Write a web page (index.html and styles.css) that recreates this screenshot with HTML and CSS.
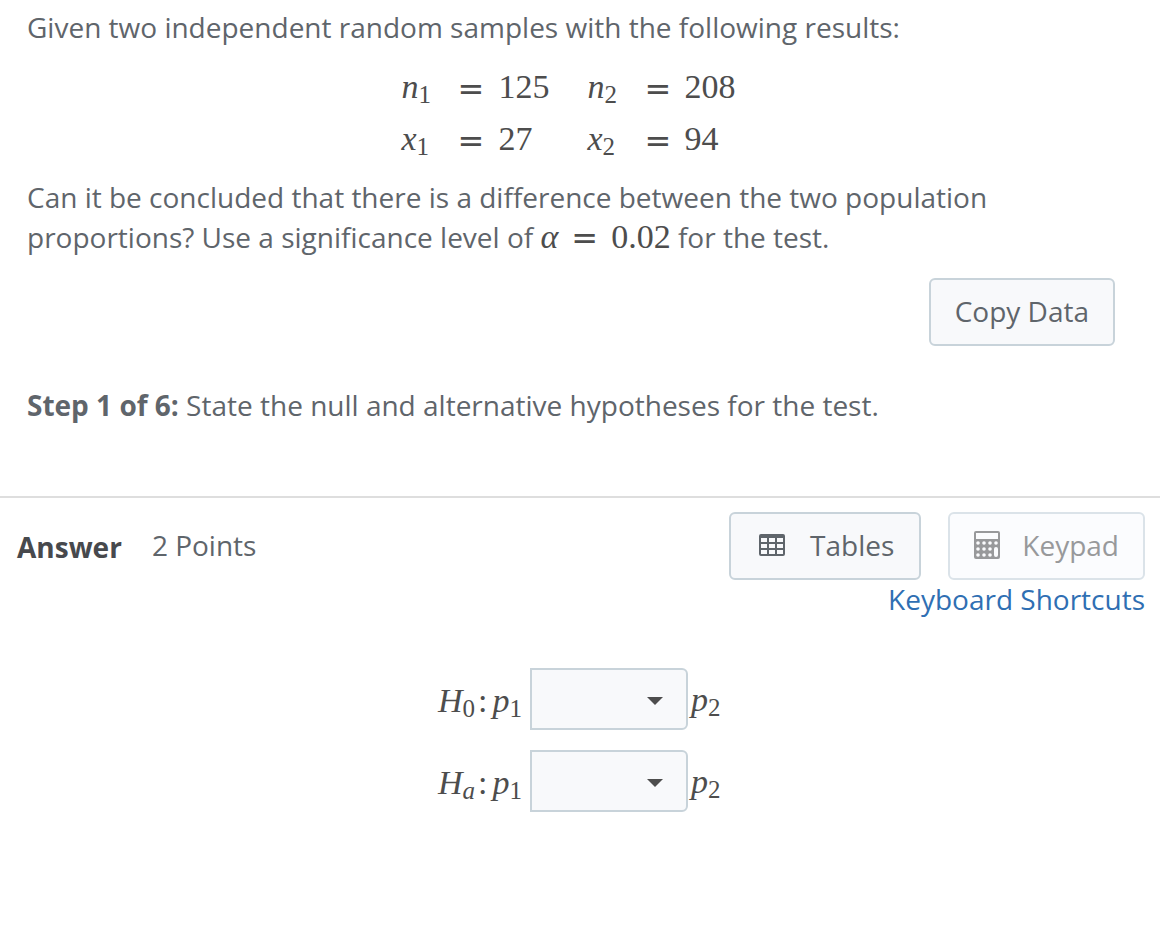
FILE: index.html
```html
<!DOCTYPE html>
<html lang="en">
<head>
<meta charset="utf-8">
<meta name="viewport" content="width=device-width, initial-scale=1">
<title>Two population proportions</title>
<link rel="stylesheet" href="styles.css">
</head>
<body>
<main>
  <section class="question">
    <p>Given two independent random samples with the following results:</p>
    <div class="data math">
      <span><i>n</i><sub>1</sub></span><span class="eq">=</span><span>125</span>
      <span><i>n</i><sub>2</sub></span><span class="eq">=</span><span>208</span>
      <span><i>x</i><sub>1</sub></span><span class="eq">=</span><span>27</span>
      <span><i>x</i><sub>2</sub></span><span class="eq">=</span><span>94</span>
    </div>
    <p>Can it be concluded that there is a difference between the two population proportions? Use a significance level of <span class="math"><i>α</i><span class="eq inline-eq">=</span>0.02</span> for the test.</p>
    <div class="copy-row"><button class="btn copy" type="button">Copy Data</button></div>
    <p class="step"><strong>Step 1 of 6:</strong> State the null and alternative hypotheses for the test.</p>
  </section>
  <section class="answer">
    <header class="answer-bar">
      <div class="heading"><h2>Answer</h2><span>2 Points</span></div>
      <div class="tools">
        <div class="buttons">
          <button class="btn tables" type="button">
            <svg width="28" height="24" viewBox="0 0 28 24" aria-hidden="true"><path fill="currentColor" fill-rule="evenodd" d="M3 1h22a2 2 0 0 1 2 2v18a2 2 0 0 1-2 2H3a2 2 0 0 1-2-2V3a2 2 0 0 1 2-2zM3 5v4h6V5zM11 5v4h6V5zM19 5v4h6V5zM3 11v4h6v-4zM11 11v4h6v-4zM19 11v4h6v-4zM3 17v4h6v-4zM11 17v4h6v-4zM19 17v4h6v-4z"/></svg>
            Tables
          </button>
          <button class="btn keypad" type="button" disabled>
            <svg width="26" height="28" viewBox="0 0 26 28" aria-hidden="true">
              <rect width="26" height="28" rx="2" fill="currentColor"/>
              <g fill="#fbfcfe"><rect x="2" y="2" width="22" height="6"/>
              <circle cx="4" cy="12" r="1.8"/><circle cx="10" cy="12" r="1.8"/><circle cx="16" cy="12" r="1.8"/><circle cx="22" cy="12" r="1.8"/>
              <circle cx="4" cy="18" r="1.8"/><circle cx="10" cy="18" r="1.8"/><circle cx="16" cy="18" r="1.8"/>
              <circle cx="4" cy="24" r="1.8"/><circle cx="10" cy="24" r="1.8"/><circle cx="16" cy="24" r="1.8"/>
              <rect x="20" y="16" width="4" height="10" rx="2"/></g>
            </svg>
            Keypad
          </button>
        </div>
        <a href="#shortcuts">Keyboard Shortcuts</a>
      </div>
    </header>
    <div class="hypotheses math">
      <div class="hyp">
        <label for="null"><i>H</i><sub>0</sub><span class="colon">:</span><i>p</i><sub>1</sub></label>
        <span class="picker"><select id="null"><option></option><option>=</option><option>≠</option><option>&lt;</option><option>&gt;</option></select><svg width="16" height="8" viewBox="0 0 16 8" aria-hidden="true"><path d="M0 0h16L8 8z" fill="#4d4d4d"/></svg></span>
        <span class="rhs"><i>p</i><sub>2</sub></span>
      </div>
      <div class="hyp">
        <label for="alt"><i>H</i><sub><i>a</i></sub><span class="colon">:</span><i>p</i><sub>1</sub></label>
        <span class="picker"><select id="alt"><option></option><option>=</option><option>≠</option><option>&lt;</option><option>&gt;</option></select><svg width="16" height="8" viewBox="0 0 16 8" aria-hidden="true"><path d="M0 0h16L8 8z" fill="#4d4d4d"/></svg></span>
        <span class="rhs"><i>p</i><sub>2</sub></span>
      </div>
    </div>
  </section>
</main>
</body>
</html>
```
FILE: styles.css
```css
* { box-sizing: border-box; }
body { margin: 0; background: #fff; color: #5f656b; font: 28px/40px "Open Sans", "Noto Sans", sans-serif; }
p, h2 { margin: 0; }
.question { padding: 7px 44px 71px 27px; }
.math { color: #4d4d4d; font-family: "Liberation Serif", serif; font-size: 34px; }
.math sub { font-size: 25px; line-height: 1; vertical-align: -5px; }
.eq { font-family: "DejaVu Sans", sans-serif; font-size: 32px; }
p .math { line-height: 1; }
.inline-eq { margin: 0 13px; line-height: 1; vertical-align: -1px; }
.data { display: grid; grid-template-columns: 56px 41px 89px 57px 40px 50px; grid-auto-rows: 52px; justify-content: center; padding-right: 7px; margin: 14px 0 12px; line-height: 52px; }
.data .eq { line-height: 56px; }
.copy-row { display: flex; justify-content: flex-end; margin: 21px 1px 39px; }
.btn { height: 68px; border: 2px solid #c8d3da; border-radius: 6px; background: #f8f9fb; color: #5f656b; font: inherit; display: flex; align-items: center; justify-content: center; padding: 0 24px 2px; }
.btn:disabled { border-color: #dbe3e9; background: #fbfcfe; color: #98999b; }
.answer { border-top: 2px solid #dedede; padding: 14px 15px 126px 17px; }
.answer-bar { display: flex; justify-content: space-between; }
.heading { display: flex; align-items: flex-start; gap: 30px; padding-top: 13px; }
.heading h2 { padding-top: 2px; color: #47494d; font-size: 28px; line-height: 40px; }
.tools { display: flex; flex-direction: column; align-items: flex-end; }
.buttons { display: flex; gap: 27px; }
.tables { gap: 24px; padding: 0 25px 2px 27px; }
.keypad { gap: 22px; }
a { color: #2f6fb3; text-decoration: none; margin-top: -1px; }
.hypotheses { display: flex; flex-direction: column; align-items: center; gap: 20px; margin-top: 49px; }
.hyp { display: grid; grid-template-columns: 104px 158px 48px; align-items: center; line-height: 40px; }
.hyp label { text-align: right; padding: 4px 8px 0 0; }
.colon { margin: 0 5px 0 3px; }
.rhs { padding: 2px 0 0 3px; }
.picker { position: relative; display: flex; }
.picker select { appearance: none; width: 100%; height: 62px; border: 2px solid #c8d3da; border-radius: 0 6px 6px 0; background: #f8f9fb; padding: 0 44px 0 16px; font: inherit; color: inherit; }
.picker svg { position: absolute; right: 25px; top: 29px; pointer-events: none; }
```
